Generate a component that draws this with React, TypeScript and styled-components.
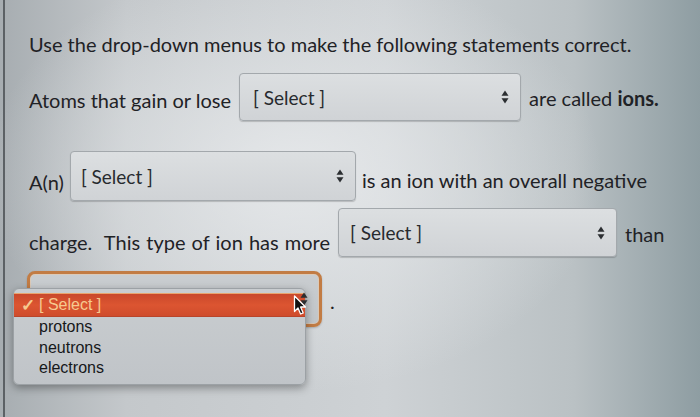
import React from "react";
import styled, { createGlobalStyle } from "styled-components";

const GlobalStyle = createGlobalStyle`
  html, body { margin: 0; padding: 0; }
  body { width: 700px; height: 417px; overflow: hidden; background: #c5c9cc; }
`;

const Screen = styled.div`
  position: relative;
  width: 700px;
  height: 417px;
  box-sizing: border-box;
  overflow: hidden;
  padding: 31px 0 0 29px;
  font-family: Lato, "Open Sans", sans-serif;
  color: #1f2226;
  background:
    radial-gradient(ellipse 55% 65% at 42% 42%, rgba(236, 238, 240, 0.8) 0%, rgba(226, 229, 231, 0.5) 45%, rgba(210, 214, 217, 0) 80%),
    linear-gradient(90deg, #a7adb1 0%, #c4c8cb 18%, #ced2d5 55%, #bac1c4 82%, #8e9da2 100%);
  &::before {
    content: "";
    position: absolute;
    left: 3px;
    top: 0;
    bottom: 0;
    width: 2px;
    background: #5c6165;
  }
`;

const Title = styled.p`
  margin: 0;
  font-size: 20px;
  line-height: 26px;
`;

const Line = styled.div<{ $top: number; $align?: string; $gap?: number }>`
  display: flex;
  align-items: ${(p) => p.$align || "flex-end"};
  gap: ${(p) => p.$gap ?? 8}px;
  margin-top: ${(p) => p.$top}px;
`;

const Words = styled.span<{ $pad?: number; $wordSpace?: number }>`
  font-size: 20px;
  line-height: 26px;
  padding-bottom: ${(p) => (p.$pad === undefined ? 8 : p.$pad)}px;
  word-spacing: ${(p) => p.$wordSpace ?? 0}px;
  white-space: pre;
  b { font-weight: 700; }
`;

const SelectBox = styled.div<{ $w: number; $h: number; $pl: number }>`
  position: relative;
  flex: none;
  box-sizing: border-box;
  width: ${(p) => p.$w}px;
  height: ${(p) => p.$h}px;
  display: flex;
  align-items: center;
  justify-content: space-between;
  padding: 0 11px 0 ${(p) => p.$pl}px;
  border: 1px solid #a3a8ac;
  border-radius: 4px;
  background: linear-gradient(180deg, #dcdfe1 0%, #d0d3d6 100%);
  box-shadow: 0 1px 1px rgba(0, 0, 0, 0.18);
  font-size: 19px;
  color: #272a2e;
`;

const FocusBox = styled(SelectBox)`
  margin-left: -2px;
  border: 3px solid #c27c44;
  border-radius: 8px;
  background: linear-gradient(180deg, #c9cdd0 0%, #c1c5c8 100%);
  box-shadow: inset 0 0 0 1px rgba(240, 200, 160, 0.5), 0 1px 2px rgba(0, 0, 0, 0.2);
`;

const Arrows = styled.svg<{ $raise?: boolean }>`
  flex: none;
  position: relative;
  z-index: ${(p) => (p.$raise ? 3 : 0)};
`;

const Menu = styled.div`
  position: absolute;
  left: -17px;
  top: 14px;
  width: 293px;
  box-sizing: border-box;
  padding: 4px 0 5px;
  border: 1px solid #9ca1a5;
  border-radius: 6px;
  background: linear-gradient(180deg, #c9cdd0 0%, #c0c4c8 100%);
  box-shadow: 0 3px 8px rgba(0, 0, 0, 0.35);
  font-family: "Liberation Sans", Arial, sans-serif;
  font-size: 16px;
  color: #16181a;
  z-index: 2;
`;

const Highlight = styled.div`
  display: flex;
  align-items: center;
  height: 24px;
  box-sizing: border-box;
  padding-left: 7px;
  border-top: 1px solid #e9a56e;
  border-bottom: 1px solid #b9442a;
  background: linear-gradient(180deg, #c9482b 0%, #dc5531 50%, #cf4c2c 100%);
  color: #f6c98f;
`;

const Check = styled.span`
  width: 18px;
  flex: none;
  font-size: 17px;
  font-weight: 700;
`;

const Item = styled.div`
  line-height: 20.5px;
  padding-left: 25px;
`;

const Cursor = styled.svg`
  position: absolute;
  right: 12px;
  top: 21px;
  z-index: 4;
`;

const Dot = styled.span`
  font-size: 20px;
  line-height: 26px;
  padding-top: 4px;
`;

const UpDown = ({ raise }: { raise?: boolean }) => (
  <Arrows $raise={raise} width="8" height="14" viewBox="0 0 8 14">
    <path d="M4 0.5 L7.5 5.8 L0.5 5.8 Z" fill="#2b2e31" />
    <path d="M4 13.5 L7.5 8.2 L0.5 8.2 Z" fill="#2b2e31" />
  </Arrows>
);

export default function App() {
  return (
    <>
      <GlobalStyle />
      <Screen>
        <Title>Use the drop-down menus to make the following statements correct.</Title>

        <Line $top={16}>
          <Words>Atoms that gain or lose</Words>
          <SelectBox $w={282} $h={48} $pl={13}>
            <span>[ Select ]</span>
            <UpDown />
          </SelectBox>
          <Words $pad={10}>
            are called <b>ions.</b>
          </Words>
        </Line>

        <Line $top={30} $gap={6}>
          <Words $pad={6}>A(n)</Words>
          <SelectBox $w={286} $h={50} $pl={10}>
            <span>[ Select ]</span>
            <UpDown />
          </SelectBox>
          <Words $pad={8}>is an ion with an overall negative</Words>
        </Line>

        <Line $top={7}>
          <Words $pad={2} $wordSpace={1}>{"charge.  This type of ion has more"}</Words>
          <SelectBox $w={279} $h={49} $pl={11}>
            <span>[ Select ]</span>
            <UpDown />
          </SelectBox>
          <Words $pad={10}>than</Words>
        </Line>

        <Line $top={14} $align="center">
          <FocusBox $w={295} $h={56} $pl={12}>
            <span />
            <UpDown raise />
            <Menu>
              <Highlight>
                <Check>✓</Check>
                <span>[ Select ]</span>
              </Highlight>
              <Item>protons</Item>
              <Item>neutrons</Item>
              <Item>electrons</Item>
            </Menu>
            <Cursor width="14" height="21" viewBox="0 0 14 21">
              <path
                d="M1.5 1 L1.5 16.5 L5 13 L7.6 19 L10.2 17.9 L7.6 12 L12.5 12 Z"
                fill="#111"
                stroke="#fff"
                strokeWidth="1.3"
                strokeLinejoin="round"
              />
            </Cursor>
          </FocusBox>
          <Dot>.</Dot>
        </Line>
      </Screen>
    </>
  );
}
